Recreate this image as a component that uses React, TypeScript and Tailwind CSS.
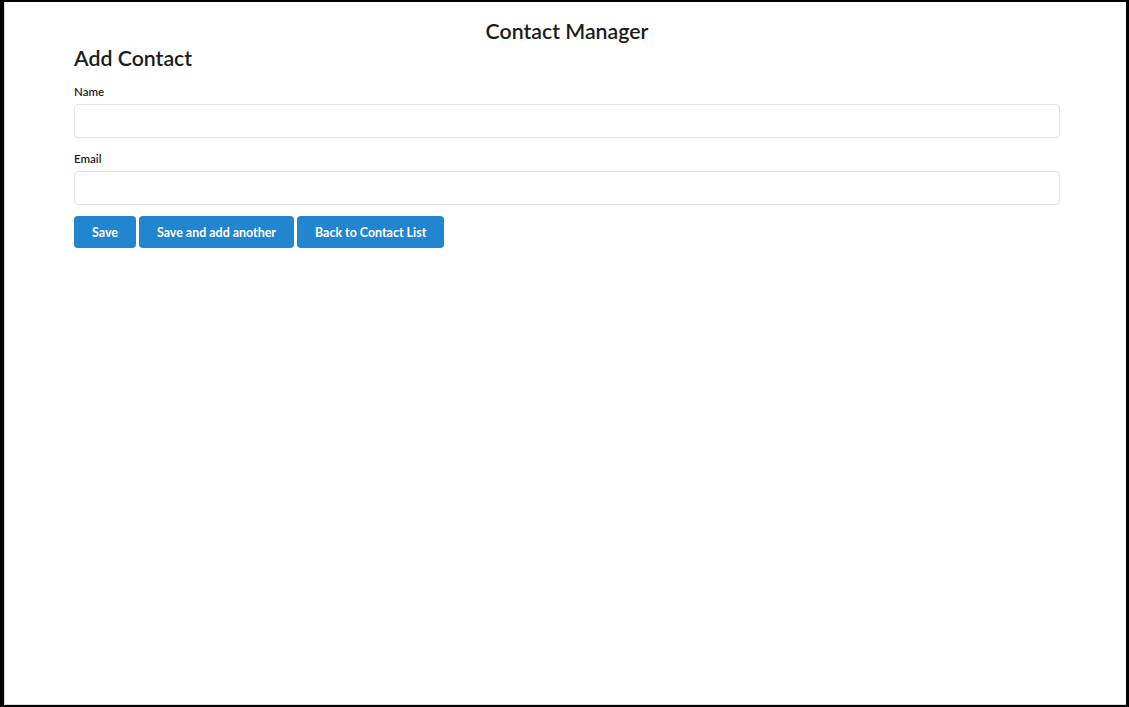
const font = { fontFamily: "Lato, 'Helvetica Neue', Arial, sans-serif" };

function Field({ label, last }: { label: string; last?: boolean }) {
  return (
    <div className={last ? "mb-[11px]" : "mb-[14px]"}>
      <label className="mb-[5px] block text-[11.5px] leading-[14px] font-semibold text-[#1b1c1d]">{label}</label>
      <input
        type="text"
        className="block h-[34px] w-full rounded-[4px] border border-[#e2e2e2] bg-white px-3 text-[13px] outline-none"
      />
    </div>
  );
}

const btn = "h-[32px] rounded-[4px] bg-[#2185d0] px-[18px] pt-[2px] text-[12.45px] font-bold text-white";

export default function App() {
  return (
    <div className="h-[707px] w-full bg-black pt-[2px] pl-[4px] pr-[3px] pb-[2px]" style={font}>
      <div className="h-full border-l border-b border-[#dcdcdc] bg-white">
        <div className="ml-[69px] w-[986px] pt-[16px]">
          <h1 className="text-center text-[21.3px] leading-[26px] font-semibold text-[#1b1c1d]">Contact Manager</h1>
          <h2 className="mt-[1px] text-[21.3px] leading-[26px] font-semibold text-[#1b1c1d]">Add Contact</h2>
          <form className="mt-[14px]">
            <Field label="Name" />
            <Field label="Email" last />
            <div className="flex gap-[3px]">
              <button type="button" className={btn}>
                Save
              </button>
              <button type="button" className={btn}>
                Save and add another
              </button>
              <button type="button" className={btn}>
                Back to Contact List
              </button>
            </div>
          </form>
        </div>
      </div>
    </div>
  );
}
